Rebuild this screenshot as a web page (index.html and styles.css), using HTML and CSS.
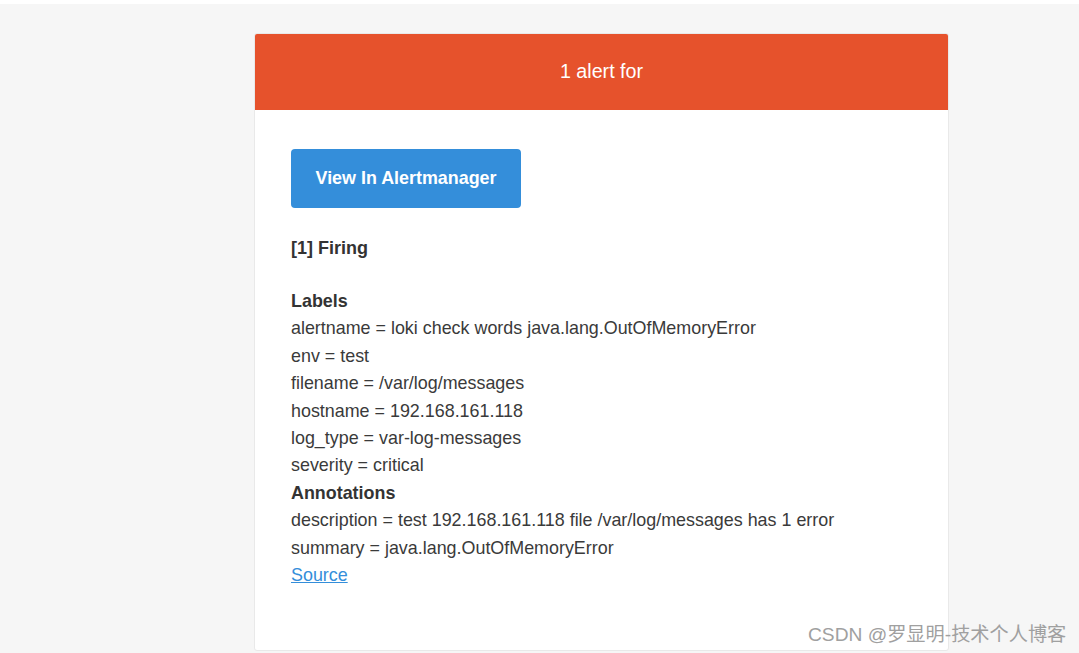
FILE: index.html
```html
<!DOCTYPE html>
<html>
<head>
<meta charset="utf-8">
<link rel="stylesheet" href="styles.css">
</head>
<body>
<div class="topstrip"></div>
<div class="page">
  <div class="card">
    <div class="header">1 alert for</div>
    <div class="content">
      <a class="btn" href="#">View In Alertmanager</a>
      <div class="firing">[1] Firing</div>
      <div class="lines">
        <div class="b">Labels</div>
        <div>alertname = loki check words java.lang.OutOfMemoryError</div>
        <div>env = test</div>
        <div>filename = /var/log/messages</div>
        <div>hostname = 192.168.161.118</div>
        <div>log_type = var-log-messages</div>
        <div>severity = critical</div>
        <div class="b">Annotations</div>
        <div>description = test 192.168.161.118 file /var/log/messages has 1 error</div>
        <div>summary = java.lang.OutOfMemoryError</div>
        <div><a class="src" href="#">Source</a></div>
      </div>
    </div>
  </div>
</div>
<div class="watermark">CSDN @罗显明-技术个人博客</div>
</body>
</html>
```
FILE: styles.css
```css
html, body {
  margin: 0;
  padding: 0;
  background: #f6f6f6;
  font-family: "Liberation Sans", Arial, sans-serif;
  color: #333;
  height: 653px;
  overflow: hidden;
}
.topstrip {
  height: 4px;
  background: #fff;
}
.page {
  padding-top: 29px;
  padding-left: 254px;
}
.card {
  width: 695px;
  height: 618px;
  background: #fff;
  border: 1px solid #e9e9e9;
  border-radius: 3px;
  box-sizing: border-box;
  overflow: hidden;
}
.header {
  background: #e6522c;
  color: #fff;
  height: 77px;
  display: flex;
  align-items: center;
  justify-content: center;
  font-size: 19.7px;
  box-sizing: border-box;
  margin: -1px -1px 0;
}
.content {
  padding: 39px 36px 0;
}
.btn {
  display: inline-block;
  width: 230px;
  height: 59px;
  line-height: 59px;
  text-align: center;
  background: #348eda;
  color: #fff;
  font-weight: bold;
  font-size: 17.9px;
  border-radius: 4px;
  text-decoration: none;
  vertical-align: top;
}
.firing {
  font-weight: bold;
  font-size: 18px;
  margin-top: 28px;
  line-height: 24px;
}
.lines {
  margin-top: 28px;
  font-size: 17.9px;
  line-height: 27.4px;
  color: #3a3a3a;
}
.lines .b {
  font-weight: bold;
  color: #333;
}
.src {
  color: #348eda;
  text-decoration: underline;
}
.watermark {
  position: absolute;
  left: 808px;
  top: 619px;
  font-size: 19.2px;
  color: #a0a0a0;
  font-family: "Liberation Sans", "Noto Sans CJK SC", sans-serif;
}
```
